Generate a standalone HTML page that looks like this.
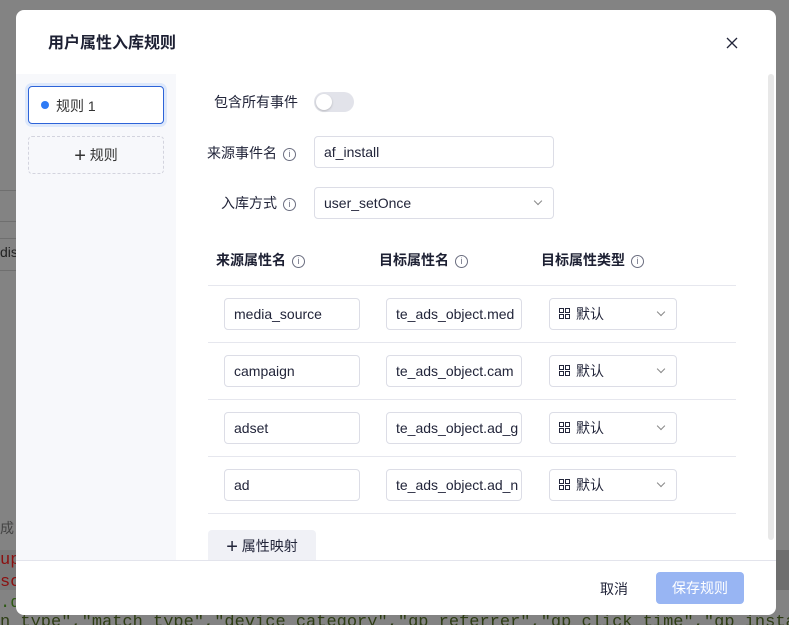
<!DOCTYPE html>
<html><head><meta charset="utf-8"><style>
*{box-sizing:border-box;margin:0;padding:0}
html,body{width:789px;height:625px;overflow:hidden}
body{background:#838383;font-family:"Liberation Sans","Noto Sans CJK SC",sans-serif;font-size:14px;color:#22253a;position:relative}
#wrap{position:absolute;left:0;top:0;width:789px;height:625px;overflow:hidden}
.abs{position:absolute}
.modal{position:absolute;left:16px;top:10px;width:760px;height:605px;background:#fff;border-radius:8px;overflow:hidden}
.title{position:absolute;left:32px;top:19px;font-size:16px;font-weight:bold;color:#1d2033}
.left{position:absolute;left:0;top:64px;width:160px;height:486px;background:#f7f8fb}
.inp{position:absolute;height:32px;border:1px solid #dcdde6;border-radius:4px;background:#fff;padding-left:9px;line-height:30px;font-size:14px;color:#22253a;overflow:hidden;white-space:nowrap}
.lbl{position:absolute;font-size:14px;color:#22253a}
.info{display:inline-block;width:13px;height:13px;border:1px solid #6b6e80;border-radius:50%;font-size:9px;line-height:11px;text-align:center;color:#6b6e80;vertical-align:1px;margin-left:6px;font-weight:normal}
.line{position:absolute;left:192px;width:528px;height:1px;background:#e6e7ee}
.chev{position:absolute;right:12px;top:10px;width:6px;height:6px;border-right:1px solid #888;border-bottom:1px solid #888;transform:rotate(45deg)}
.hdr{position:absolute;top:240px;font-weight:bold;font-size:14px;color:#1d2033}
.grid{display:inline-block;width:11px;height:11px;vertical-align:0;margin-right:6px;position:relative}
.grid i{position:absolute;width:5px;height:5px;border:1.3px solid #22253a}
.code{position:absolute;left:0;font-family:"Liberation Mono",monospace;font-size:17px;white-space:nowrap}
</style></head><body><div id="wrap">
<div class="abs" style="left:0;top:190px;width:16px;height:1px;background:#6f6f6f"></div>
<div class="abs" style="left:0;top:221px;width:16px;height:1px;background:#6f6f6f"></div>
<div class="abs" style="left:0;top:238px;width:16px;height:1px;background:#6f6f6f"></div>
<div class="abs" style="left:0;top:270px;width:16px;height:1px;background:#6f6f6f"></div>
<div class="abs" style="left:0;top:244px;font-size:14px;color:#222">dis</div>
<div class="abs" style="left:0;top:518px;font-size:14px;color:#444">成</div>
<div class="abs" style="left:0;top:550px;width:789px;height:40px;background:#7a7a7a"></div>
<div class="abs" style="left:776px;top:550px;width:13px;height:40px;background:#6e6e6e"></div>
<div class="code" style="top:551px;color:#8b1010">upp</div>
<div class="code" style="top:573px;color:#8b1010">sou</div>
<div class="code" style="top:594px;color:#2d5a14">.d'</div>
<div class="code" style="top:613px;color:#2d3d14">n_type","match_type","device_category","gp_referrer","gp_click_time","gp_install_ho</div>

<div class="modal">
<div class="title">用户属性入库规则</div>
<svg class="abs" style="left:709px;top:26px" width="14" height="14" viewBox="0 0 14 14"><path d="M2 2L12 12M12 2L2 12" stroke="#22253a" stroke-width="1.3"/></svg>
<div class="left">
 <div class="abs" style="left:12px;top:12px;width:136px;height:38px;border:1.5px solid #2d63d8;border-radius:4px;background:#fff;box-shadow:0 0 0 3px #dde8fb"></div>
 <div class="abs" style="left:25px;top:27px;width:8px;height:8px;border-radius:50%;background:#2f7bf5"></div>
 <div class="abs" style="left:40px;top:22px;font-size:14px;color:#333">规则 1</div>
 <div class="abs" style="left:12px;top:62px;width:136px;height:38px;border:1px dashed #d3d4de;border-radius:4px;text-align:center;line-height:36px;color:#333"><span style="font-size:20px;vertical-align:-2px">+</span> 规则</div>
</div>
<div class="abs" style="left:752px;top:64px;width:6px;height:466px;background:#e8e8e8;border-radius:3px"></div>

<div class="lbl" style="left:198px;top:82px">包含所有事件</div>
<div class="abs" style="left:298px;top:82px;width:40px;height:20px;border-radius:10px;background:#e2e3ea"></div>
<div class="abs" style="left:300px;top:84px;width:16px;height:16px;border-radius:50%;background:#fff;box-shadow:0 1px 2px rgba(0,0,0,.2)"></div>

<div class="lbl" style="left:191px;top:133px">来源事件名<span class="info">i</span></div>
<div class="inp" style="left:298px;top:126px;width:240px">af_install</div>
<div class="lbl" style="left:205px;top:183px">入库方式<span class="info">i</span></div>
<div class="inp" style="left:298px;top:177px;width:240px">user_setOnce<div class="chev"></div></div>

<div class="hdr" style="left:200px">来源属性名<span class="info">i</span></div>
<div class="hdr" style="left:363px">目标属性名<span class="info">i</span></div>
<div class="hdr" style="left:525px">目标属性类型<span class="info">i</span></div>

<div class="line" style="top:275px"></div>
<div class="line" style="top:332px"></div>
<div class="line" style="top:389px"></div>
<div class="line" style="top:446px"></div>
<div class="line" style="top:503px"></div>

<div class="inp" style="left:208px;top:288px;width:136px">media_source</div>
<div class="inp" style="left:370px;top:288px;width:136px">te_ads_object.med</div>
<div class="inp" style="left:533px;top:288px;width:128px"><span class="grid"><i style="left:0;top:0"></i><i style="left:6px;top:0"></i><i style="left:0;top:6px"></i><i style="left:6px;top:6px"></i></span>默认<div class="chev"></div></div>
<div class="inp" style="left:208px;top:345px;width:136px">campaign</div>
<div class="inp" style="left:370px;top:345px;width:136px">te_ads_object.cam</div>
<div class="inp" style="left:533px;top:345px;width:128px"><span class="grid"><i style="left:0;top:0"></i><i style="left:6px;top:0"></i><i style="left:0;top:6px"></i><i style="left:6px;top:6px"></i></span>默认<div class="chev"></div></div>
<div class="inp" style="left:208px;top:402px;width:136px">adset</div>
<div class="inp" style="left:370px;top:402px;width:136px">te_ads_object.ad_g</div>
<div class="inp" style="left:533px;top:402px;width:128px"><span class="grid"><i style="left:0;top:0"></i><i style="left:6px;top:0"></i><i style="left:0;top:6px"></i><i style="left:6px;top:6px"></i></span>默认<div class="chev"></div></div>
<div class="inp" style="left:208px;top:459px;width:136px">ad</div>
<div class="inp" style="left:370px;top:459px;width:136px">te_ads_object.ad_n</div>
<div class="inp" style="left:533px;top:459px;width:128px"><span class="grid"><i style="left:0;top:0"></i><i style="left:6px;top:0"></i><i style="left:0;top:6px"></i><i style="left:6px;top:6px"></i></span>默认<div class="chev"></div></div>

<div class="abs" style="left:192px;top:520px;width:108px;height:30px;background:#f0f1f6;border-radius:4px 4px 0 0;text-align:center;line-height:32px;color:#22253a"><span style="font-size:20px;vertical-align:-2px">+</span> 属性映射</div>
<div class="abs" style="left:0;top:550px;width:760px;height:1px;background:#e3e4ec"></div>
<div class="abs" style="left:584px;top:569px;color:#22253a">取消</div>
<div class="abs" style="left:640px;top:562px;width:88px;height:32px;background:#98b5f3;border-radius:4px;color:#fff;text-align:center;line-height:32px">保存规则</div>
</div>
</div></body></html>
